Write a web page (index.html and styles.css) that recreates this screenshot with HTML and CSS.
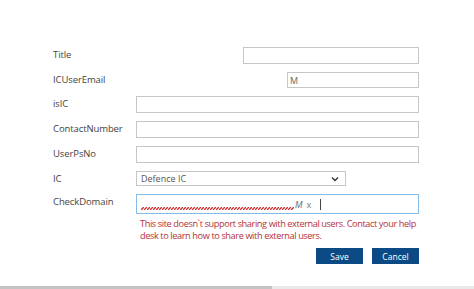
FILE: index.html
```html
<!DOCTYPE html>
<html lang="en">
<head>
    <meta charset="UTF-8">
    <title>New Item</title>
    <link rel="stylesheet" href="styles.css">
</head>
<body>
    <div class="page">
        <div class="form">
            <div class="row">
                <label class="label">Title</label>
                <div class="field"><div class="input input-title"></div></div>
            </div>
            <div class="row">
                <label class="label">ICUserEmail</label>
                <div class="field"><div class="input input-email">M</div></div>
            </div>
            <div class="row">
                <label class="label">isIC</label>
                <div class="field"><div class="input"></div></div>
            </div>
            <div class="row">
                <label class="label">ContactNumber</label>
                <div class="field"><div class="input"></div></div>
            </div>
            <div class="row">
                <label class="label">UserPsNo</label>
                <div class="field"><div class="input"></div></div>
            </div>
            <div class="row">
                <label class="label">IC</label>
                <div class="field">
                    <div class="input select">
                        <span class="select-value">Defence IC</span>
                        <svg class="chevron" width="8" height="6" viewBox="0 0 8 6"><path d="M1 1.5 L4 4.5 L7 1.5" fill="none" stroke="#333" stroke-width="1.4"/></svg>
                    </div>
                </div>
            </div>
            <div class="row">
                <label class="label">CheckDomain</label>
                <div class="field">
                    <div class="input input-focus">
                        <span class="squiggle"></span><span class="token">M</span><span class="remove">x</span><span class="caret"></span>
                    </div>
                    <div class="error">This site doesn`t support sharing with external users. Contact your help<br>desk to learn how to share with external users.</div>
                </div>
            </div>
        </div>
        <div class="actions">
            <button class="btn">Save</button>
            <button class="btn">Cancel</button>
        </div>
    </div>
    <div class="scrollbar"><div class="scroll-thumb"></div></div>
</body>
</html>
```

FILE: styles.css
```css
html, body {
    margin: 0;
    padding: 0;
    background: #fff;
}
body {
    width: 474px;
    height: 289px;
    display: flex;
    flex-direction: column;
    font-family: "Open Sans", Arial, sans-serif;
    font-size: 9.5px;
    color: #444;
    overflow: hidden;
}
.page {
    flex: 1;
    padding: 47px 55px 0 53px;
}
.form {
    display: flex;
    flex-direction: column;
    gap: 8px;
}
.row {
    display: grid;
    grid-template-columns: 83px 283px;
    align-items: start;
}
.label {
    padding-top: 1px;
    line-height: 14px;
    letter-spacing: -0.1px;
}
.input {
    box-sizing: border-box;
    height: 17px;
    border: 1px solid #c6c6c6;
    background: #fff;
    display: flex;
    align-items: center;
    padding: 0 3px;
    color: #666;
    font-size: 9px;
}
.input-title {
    margin-left: 107px;
}
.input-email {
    margin-left: 151px;
    height: 16px;
    padding-left: 2px;
}
.select {
    width: 210px;
    height: 15px;
    justify-content: space-between;
    padding: 0 6px 0 4px;
    color: #555;
}
.select-value {
    line-height: 12px;
}
.input-focus {
    height: 20px;
    border-color: #86bde8;
    padding-left: 4px;
}
.squiggle {
    display: inline-block;
    width: 153px;
    height: 3px;
    margin-top: 8px;
    background:
        linear-gradient(135deg, transparent 35%, #c33 35%, #c33 65%, transparent 65%) 0 0 / 3px 3px repeat-x,
        linear-gradient(45deg, transparent 35%, #c33 35%, #c33 65%, transparent 65%) 1.5px 0 / 3px 3px repeat-x;
}
.token {
    margin-left: 1px;
    font-style: italic;
    color: #666;
}
.remove {
    margin-left: 4px;
    color: #777;
}
.caret {
    width: 1px;
    height: 11px;
    background: #444;
    margin-left: 9px;
}
.error {
    color: #b3323b;
    padding: 4px 0 0 4px;
    line-height: 11.5px;
    font-size: 9.2px;
    letter-spacing: -0.4px;
    white-space: nowrap;
}
.actions {
    display: flex;
    justify-content: flex-end;
    gap: 9px;
    margin-top: 7px;
}
.btn {
    width: 47px;
    height: 16px;
    border: none;
    background: #0b4a84;
    color: #fff;
    font-family: "Open Sans", Arial, sans-serif;
    font-size: 8.5px;
    padding: 0;
}
.scrollbar {
    height: 3px;
    background: #e9e9e9;
}
.scroll-thumb {
    width: 272px;
    height: 3px;
    background: #c4c4c4;
}
```
